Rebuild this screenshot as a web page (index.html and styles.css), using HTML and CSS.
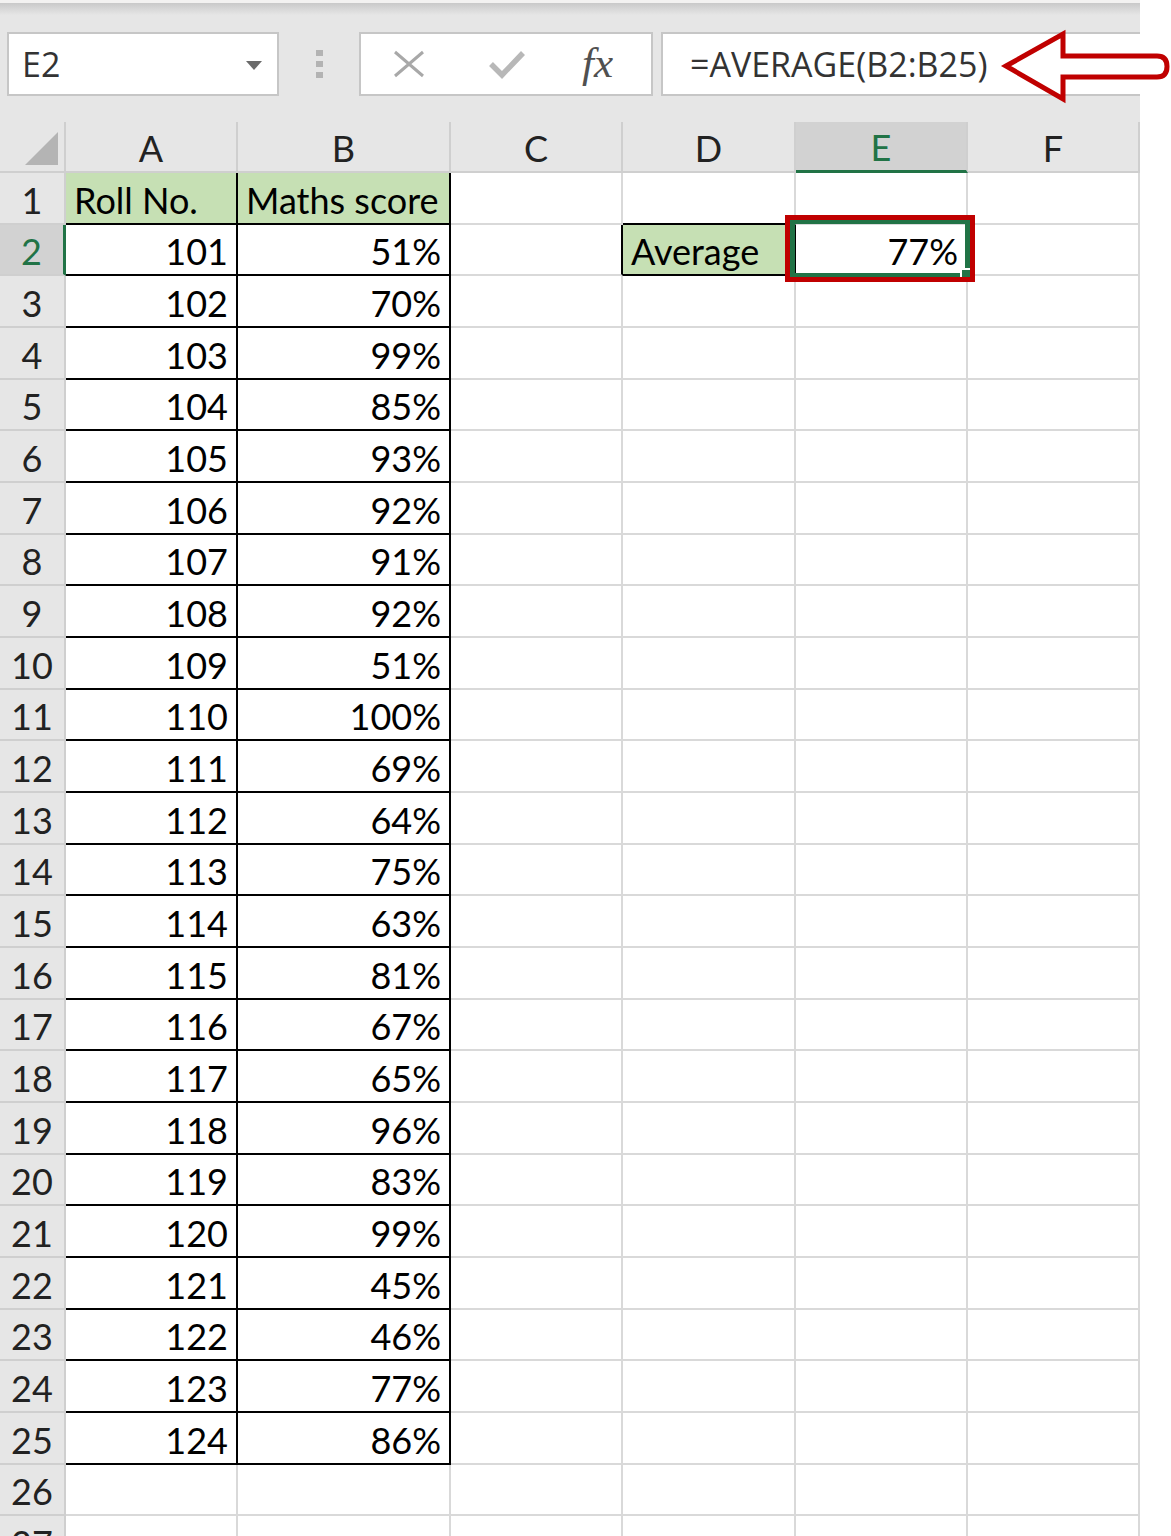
FILE: index.html
```html
<!DOCTYPE html>
<html lang="en">
<head>
    <meta charset="UTF-8">
    <meta name="viewport" content="width=device-width, initial-scale=1.0">
    <title>AVERAGE - Excel</title>
    <link rel="stylesheet" href="styles.css">
</head>
<body>
    <div class="page">
        <div class="app">
            <div class="ribbon-edge"></div>

            <div class="formula-bar">
                <div class="name-box">
                    <span>E2</span>
                    <span class="caret"></span>
                </div>
                <div class="grip"><i></i><i></i><i></i></div>
                <div class="fx-buttons">
                    <svg class="icon-cancel" width="34" height="28" viewBox="0 0 34 28">
                        <path d="M3 2 L31 26 M31 2 L3 26" />
                    </svg>
                    <svg class="icon-enter" width="38" height="30" viewBox="0 0 38 30">
                        <path d="M3 15 L14 26 L35 4" />
                    </svg>
                    <span class="fx">fx</span>
                </div>
                <div class="formula">=AVERAGE(B2:B25)</div>
            </div>

            <div class="sheet">
                <div class="corner"><span class="tri"></span></div>
                <div class="ch">A</div><div class="ch">B</div><div class="ch">C</div><div class="ch">D</div><div class="ch sel">E</div><div class="ch">F</div>

                <div class="rh">1</div><div class="c box fill">Roll No.</div><div class="c box fill">Maths score</div><div class="c"></div><div class="c edge-b"></div><div class="c"></div><div class="c"></div>
                <div class="rh sel">2</div><div class="c num box">101</div><div class="c num box">51%</div><div class="c edge-r"></div><div class="c box fill">Average</div>
                <div class="c num active">77%<div class="selection"><span class="handle"></span></div><div class="highlight"></div></div><div class="c"></div>
                <div class="rh">3</div><div class="c num box">102</div><div class="c num box">70%</div><div class="c"></div><div class="c"></div><div class="c"></div><div class="c"></div>
                <div class="rh">4</div><div class="c num box">103</div><div class="c num box">99%</div><div class="c"></div><div class="c"></div><div class="c"></div><div class="c"></div>
                <div class="rh">5</div><div class="c num box">104</div><div class="c num box">85%</div><div class="c"></div><div class="c"></div><div class="c"></div><div class="c"></div>
                <div class="rh">6</div><div class="c num box">105</div><div class="c num box">93%</div><div class="c"></div><div class="c"></div><div class="c"></div><div class="c"></div>
                <div class="rh">7</div><div class="c num box">106</div><div class="c num box">92%</div><div class="c"></div><div class="c"></div><div class="c"></div><div class="c"></div>
                <div class="rh">8</div><div class="c num box">107</div><div class="c num box">91%</div><div class="c"></div><div class="c"></div><div class="c"></div><div class="c"></div>
                <div class="rh">9</div><div class="c num box">108</div><div class="c num box">92%</div><div class="c"></div><div class="c"></div><div class="c"></div><div class="c"></div>
                <div class="rh">10</div><div class="c num box">109</div><div class="c num box">51%</div><div class="c"></div><div class="c"></div><div class="c"></div><div class="c"></div>
                <div class="rh">11</div><div class="c num box">110</div><div class="c num box">100%</div><div class="c"></div><div class="c"></div><div class="c"></div><div class="c"></div>
                <div class="rh">12</div><div class="c num box">111</div><div class="c num box">69%</div><div class="c"></div><div class="c"></div><div class="c"></div><div class="c"></div>
                <div class="rh">13</div><div class="c num box">112</div><div class="c num box">64%</div><div class="c"></div><div class="c"></div><div class="c"></div><div class="c"></div>
                <div class="rh">14</div><div class="c num box">113</div><div class="c num box">75%</div><div class="c"></div><div class="c"></div><div class="c"></div><div class="c"></div>
                <div class="rh">15</div><div class="c num box">114</div><div class="c num box">63%</div><div class="c"></div><div class="c"></div><div class="c"></div><div class="c"></div>
                <div class="rh">16</div><div class="c num box">115</div><div class="c num box">81%</div><div class="c"></div><div class="c"></div><div class="c"></div><div class="c"></div>
                <div class="rh">17</div><div class="c num box">116</div><div class="c num box">67%</div><div class="c"></div><div class="c"></div><div class="c"></div><div class="c"></div>
                <div class="rh">18</div><div class="c num box">117</div><div class="c num box">65%</div><div class="c"></div><div class="c"></div><div class="c"></div><div class="c"></div>
                <div class="rh">19</div><div class="c num box">118</div><div class="c num box">96%</div><div class="c"></div><div class="c"></div><div class="c"></div><div class="c"></div>
                <div class="rh">20</div><div class="c num box">119</div><div class="c num box">83%</div><div class="c"></div><div class="c"></div><div class="c"></div><div class="c"></div>
                <div class="rh">21</div><div class="c num box">120</div><div class="c num box">99%</div><div class="c"></div><div class="c"></div><div class="c"></div><div class="c"></div>
                <div class="rh">22</div><div class="c num box">121</div><div class="c num box">45%</div><div class="c"></div><div class="c"></div><div class="c"></div><div class="c"></div>
                <div class="rh">23</div><div class="c num box">122</div><div class="c num box">46%</div><div class="c"></div><div class="c"></div><div class="c"></div><div class="c"></div>
                <div class="rh">24</div><div class="c num box">123</div><div class="c num box">77%</div><div class="c"></div><div class="c"></div><div class="c"></div><div class="c"></div>
                <div class="rh">25</div><div class="c num box">124</div><div class="c num box">86%</div><div class="c"></div><div class="c"></div><div class="c"></div><div class="c"></div>
                <div class="rh">26</div><div class="c"></div><div class="c"></div><div class="c"></div><div class="c"></div><div class="c"></div><div class="c"></div>
                <div class="rh">27</div><div class="c"></div><div class="c"></div><div class="c"></div><div class="c"></div><div class="c"></div><div class="c"></div>
            </div>
        </div>

        <!-- callout arrow pointing at the formula -->
        <svg class="callout-arrow" width="176" height="84" viewBox="995 24 176 84">
            <path d="M1006 66 L1063 34 L1063 56 L1157 56 Q1167 56 1167 66.5 Q1167 77 1157 77 L1063 77 L1063 99 Z" />
        </svg>
    </div>
</body>
</html>
```

FILE: styles.css
```css
body { margin: 0; background: #fff; }
.page { position: relative; width: 1171px; }
.app {
    width: 1140px;
    height: 1536px;
    overflow: hidden;
    background: #e6e6e6;
}
.ribbon-edge { height: 3px; background: #f3f2f1; }

/* formula bar */
.formula-bar {
    display: flex;
    align-items: center;
    padding: 29px 0 26px 7px;
    background: linear-gradient(#c9c9c9, #e6e6e6 12px);
    font-family: "Open Sans", "Noto Sans", sans-serif;
    font-size: 34px;
    color: #333;
}
.name-box, .fx-buttons, .formula {
    box-sizing: border-box;
    height: 64px;
    border: 2px solid #c6c6c6;
    background: #fff;
    display: flex;
    align-items: center;
}
.name-box { width: 272px; padding: 0 15px 0 13px; justify-content: space-between; }
.caret {
    width: 0; height: 0;
    border-left: 8.5px solid transparent;
    border-right: 8.5px solid transparent;
    border-top: 9px solid #6a6a6a;
    margin-top: 2px;
}
.grip { display: flex; flex-direction: column; gap: 5px; margin: 0 36px 0 37px; }
.grip i { display: block; width: 7px; height: 6px; background: #b3b3b3; }
.fx-buttons { width: 294px; padding-left: 31px; }
.icon-cancel path { fill: none; stroke: #a8a8a8; stroke-width: 3; }
.icon-enter { margin-left: 62px; }
.icon-enter path { fill: none; stroke: #b8b8b8; stroke-width: 5.5; }
.fx {
    margin-left: 56px;
    font-family: "Liberation Serif", serif;
    font-style: italic;
    font-size: 43px;
    color: #505050;
    margin-top: -4px;
}
.formula { flex: 1; margin-left: 8px; margin-right: -4px; padding-left: 27px; }

.callout-arrow { position: absolute; left: 995px; top: 24px; }
.callout-arrow path { fill: #fff; stroke: #c00000; stroke-width: 5; stroke-linejoin: miter; }

/* worksheet grid */
.sheet {
    display: grid;
    grid-template-columns: 66px 172px 213px 172px 173px 172px 172px;
    grid-template-rows: 51px;
    grid-auto-rows: 51.68px;
    font-family: Lato, "Liberation Sans", sans-serif;
    font-size: 36px;
    line-height: 1;
    background: #fff;
}
.sheet > div {
    box-sizing: border-box;
    display: flex;
    align-items: flex-end;
    padding-bottom: 5px;
    border-right: 2px solid #d9d9d9;
    border-bottom: 2px solid #d9d9d9;
}
.corner, .ch, .rh { background: #e6e6e6; color: #222; justify-content: center; }
.sheet > .corner, .sheet > .ch, .sheet > .rh { border-color: #cfcfcf; }
.corner { position: relative; }
.tri {
    position: absolute;
    left: 25px; top: 10px;
    width: 0; height: 0;
    border-left: 33px solid transparent;
    border-bottom: 33px solid #b4b4b4;
}
.sheet > .ch.sel { background: #d2d2d2; color: #217346; border-bottom: 3px solid #217346; }
.sheet > .rh.sel { background: #d2d2d2; color: #217346; border-right: 3px solid #217346; }

.c { padding: 0 8px; color: #000; }
.num { justify-content: flex-end; }
.fill { background: #c6e0b4; }
.sheet > .box { border-right-color: #000; border-bottom-color: #000; }
.sheet > .edge-r { border-right-color: #000; }
.sheet > .edge-b { border-bottom-color: #000; }

.active { position: relative; }
.selection {
    position: absolute;
    left: -6px; right: -4px; top: -6px; bottom: -4px;
    border: 5px solid #217346;
}
.handle {
    position: absolute;
    right: -5px; bottom: -5px;
    width: 8px; height: 8px;
    border-left: 2px solid #fff;
    border-top: 2px solid #fff;
    background: #217346;
}
.highlight {
    position: absolute;
    left: -11px; right: -9px; top: -10px; bottom: -8px;
    border: 5px solid #c00000;
}
```
